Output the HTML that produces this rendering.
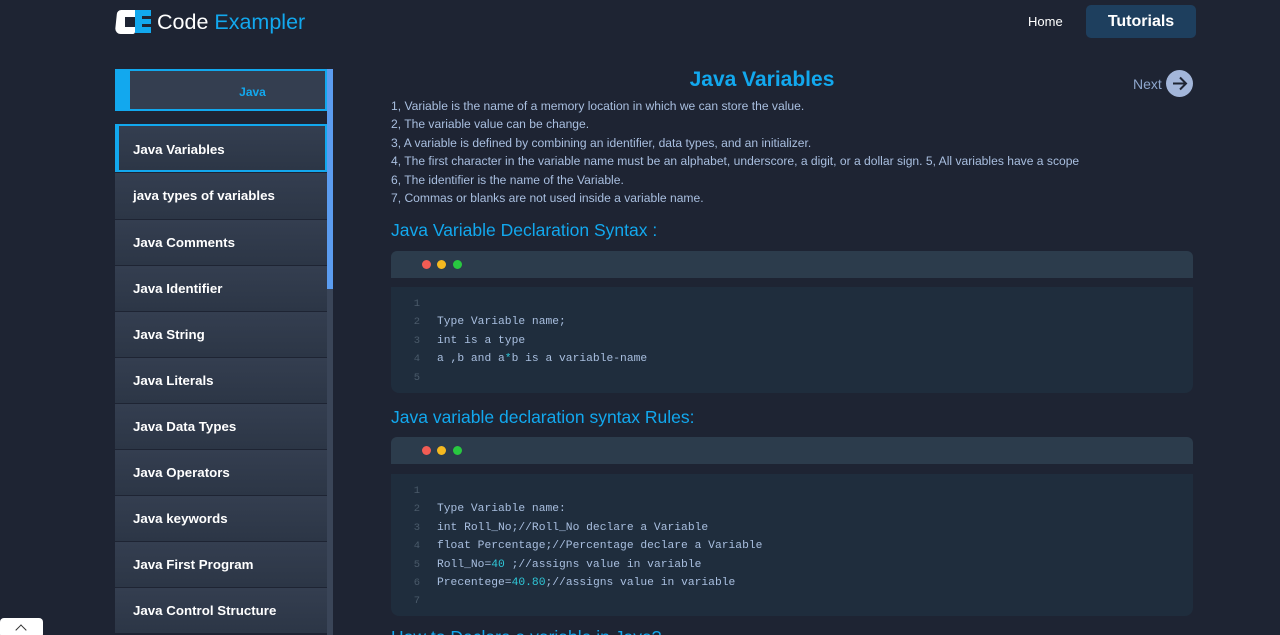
<html style="height:635px;overflow:hidden"><head><style>
body{margin:0;width:1280px;height:635px;overflow:hidden;background:#1e2433;font-family:"Liberation Sans",sans-serif;position:relative}
.a{position:absolute}
.item{position:absolute;left:115px;width:212px;height:45px;background:linear-gradient(#343e50,#2c3646);color:#fff;font-weight:bold;font-size:13.3px;line-height:45px;padding-left:18px;box-sizing:border-box}
.p{color:#a9bfe0;font-size:12.1px;line-height:18.4px}
h2{position:absolute;margin:0;color:#12a8ee;font-weight:normal;font-size:17.5px}
.hd{position:absolute;left:391px;width:802px;height:27px;background:#2c3c4c;border-radius:6px 6px 0 0}
.dot{position:absolute;top:9px;width:9px;height:9px;border-radius:50%}
.bd{position:absolute;left:391px;width:802px;background:#1f2d3d;border-radius:0 0 8px 8px;font-family:"Liberation Mono",monospace;font-size:11.3px;color:#a9bfe0;line-height:18.4px;padding-top:8px;box-sizing:border-box}
.ln{display:inline-block;width:46px;text-align:right;padding-right:17px;box-sizing:border-box;color:#4a5a6a;font-size:10.5px}
.n{color:#2fc7d8}
</style></head><body>
<div class="a" style="left:116px;top:9px;width:36px;height:26px">
<div class="a" style="left:0;top:1px;width:20px;height:24px;background:#fff;border-radius:4px 2px 2px 6px;transform:skewX(-6deg)"></div>
<div class="a" style="left:9px;top:8px;width:11px;height:10px;background:#1e2433"></div>
<div class="a" style="left:19px;top:1px;width:16px;height:23px;background:#12a8ee"></div>
<div class="a" style="left:26px;top:7px;width:9px;height:3px;background:#1e2433"></div>
<div class="a" style="left:26px;top:15px;width:9px;height:3px;background:#1e2433"></div>
</div>
<div class="a" style="left:157px;top:10px;font-size:21.5px;color:#fff">Code <span style="color:#12a8ee">Exampler</span></div>
<div class="a" style="left:1028px;top:14px;color:#fff;font-size:13px">Home</div>
<div class="a" style="left:1086px;top:5px;width:110px;height:33px;background:#1e3f5e;border-radius:5px;color:#fff;font-weight:bold;font-size:16px;text-align:center;line-height:33px">Tutorials</div>
<div class="a" style="left:115px;top:69px;width:212px;height:42px;background:#343e50;border:2px solid #12a8ee;border-left:15px solid #12a8ee;box-sizing:border-box;color:#12a8ee;font-weight:bold;font-size:12px;text-align:center;line-height:42px;padding-left:50px">Java</div>
<div class="item" style="top:124px;height:48px;border:2px solid #12a8ee;border-left-width:4px;line-height:48px;padding-left:14px">Java Variables</div>
<div class="item" style="top:173px;height:46px;line-height:46px">java types of variables</div>
<div class="item" style="top:220px">Java Comments</div>
<div class="item" style="top:266px">Java Identifier</div>
<div class="item" style="top:312px">Java String</div>
<div class="item" style="top:358px">Java Literals</div>
<div class="item" style="top:404px">Java Data Types</div>
<div class="item" style="top:450px">Java Operators</div>
<div class="item" style="top:496px">Java keywords</div>
<div class="item" style="top:542px">Java First Program</div>
<div class="item" style="top:588px">Java Control Structure</div>
<div class="a" style="left:327px;top:69px;width:6px;height:566px;background:#3a4558"></div>
<div class="a" style="left:327px;top:69px;width:6px;height:220px;background:#5b9cf0"></div>
<div class="a" style="left:0;top:618px;width:43px;height:20px;background:#fff;border-radius:4px"><div class="a" style="left:17px;top:8px;width:7px;height:7px;border-left:1.5px solid #333;border-top:1.5px solid #333;transform:rotate(45deg)"></div></div>
<div class="a" style="left:391px;top:68px;width:742px;text-align:center;color:#12a8ee;font-weight:bold;font-size:21px">Java Variables</div>
<div class="a" style="left:1133px;top:76px;color:#8ea6cc;font-size:14px">Next</div>
<div class="a" style="left:1166px;top:70px;width:27px;height:27px;border-radius:50%;background:#a3b6da"><svg width="27" height="27" viewBox="0 0 27 27"><path d="M7 13.5H20M14 7.5L20 13.5L14 19.5" stroke="#1e2433" stroke-width="2" fill="none"/></svg></div>
<div class="a p" style="left:391px;top:97px">1, Variable is the name of a memory location in which we can store the value.<br>2, The variable value can be change.<br>3, A variable is defined by combining an identifier, data types, and an initializer.<br>4, The first character in the variable name must be an alphabet, underscore, a digit, or a dollar sign. 5, All variables have a scope<br>6, The identifier is the name of the Variable.<br>7, Commas or blanks are not used inside a variable name.</div>
<h2 style="left:391px;top:220px">Java Variable Declaration Syntax :</h2>
<div class="hd" style="top:251px"><div class="dot" style="left:31px;background:#f25c54"></div><div class="dot" style="left:46px;background:#f5b920"></div><div class="dot" style="left:62px;background:#28c840"></div></div>
<div class="bd" style="top:287px;height:106px"><span class="ln">1</span><br><span class="ln">2</span>Type Variable name;<br><span class="ln">3</span>int is a type<br><span class="ln">4</span>a ,b and a<span class="n">*</span>b is a variable-name<br><span class="ln">5</span></div>
<h2 style="left:391px;top:407px">Java variable declaration syntax Rules:</h2>
<div class="hd" style="top:437px"><div class="dot" style="left:31px;background:#f25c54"></div><div class="dot" style="left:46px;background:#f5b920"></div><div class="dot" style="left:62px;background:#28c840"></div></div>
<div class="bd" style="top:474px;height:142px"><span class="ln">1</span><br><span class="ln">2</span>Type Variable name:<br><span class="ln">3</span>int Roll_No;//Roll_No declare a Variable<br><span class="ln">4</span>float Percentage;//Percentage declare a Variable<br><span class="ln">5</span>Roll_No=<span class="n">40</span> ;//assigns value in variable<br><span class="ln">6</span>Precentege=<span class="n">40.80</span>;//assigns value in variable<br><span class="ln">7</span></div>
<h2 style="left:391px;top:627px">How to Declare a variable in Java?</h2>
</body></html>
